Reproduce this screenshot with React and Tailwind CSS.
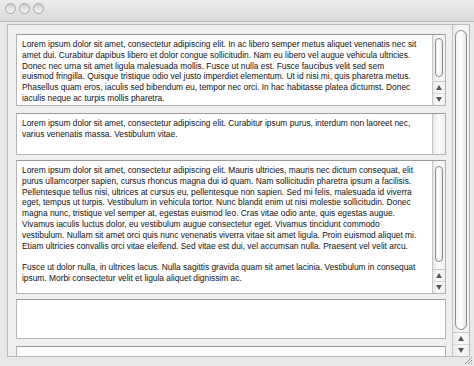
import React from 'react';

const boxes = [
  {
    h: 'h-[72px]',
    mt: 'mt-0',
    bar: { thumbTop: 3, thumbH: 39, arrows: true },
    lines: [
      'Lorem ipsum dolor sit amet, consectetur adipiscing elit. In ac libero semper metus aliquet venenatis nec sit',
      'amet dui. Curabitur dapibus libero et dolor congue sollicitudin. Nam eu libero vel augue vehicula ultricies.',
      'Donec nec urna sit amet ligula malesuada mollis. Fusce ut nulla est. Fusce faucibus velit sed sem',
      'euismod fringilla. Quisque tristique odio vel justo imperdiet elementum. Ut id nisi mi, quis pharetra metus.',
      'Phasellus quam eros, iaculis sed bibendum eu, tempor nec orci. In hac habitasse platea dictumst. Donec',
      'iaculis neque ac turpis mollis pharetra.',
    ],
  },
  {
    h: 'h-[42px]',
    mt: 'mt-[7px]',
    bar: { empty: true },
    lines: [
      'Lorem ipsum dolor sit amet, consectetur adipiscing elit. Curabitur ipsum purus, interdum non laoreet nec,',
      'varius venenatis massa. Vestibulum vitae.',
    ],
  },
  {
    h: 'h-[134px]',
    mt: 'mt-[5px]',
    bar: { thumbTop: 5, thumbH: 96, arrows: true },
    lines: [
      'Lorem ipsum dolor sit amet, consectetur adipiscing elit. Mauris ultricies, mauris nec dictum consequat, elit',
      'purus ullamcorper sapien, cursus rhoncus magna dui id quam. Nam sollicitudin pharetra ipsum a facilisis.',
      'Pellentesque tellus nisi, ultrices at cursus eu, pellentesque non sapien. Sed mi felis, malesuada id viverra',
      'eget, tempus ut turpis. Vestibulum in vehicula tortor. Nunc blandit enim ut nisi molestie sollicitudin. Donec',
      'magna nunc, tristique vel semper at, egestas euismod leo. Cras vitae odio ante, quis egestas augue.',
      'Vivamus iaculis luctus dolor, eu vestibulum augue consectetur eget. Vivamus tincidunt commodo',
      'vestibulum. Nullam sit amet orci quis nunc venenatis viverra vitae sit amet ligula. Proin euismod aliquet mi.',
      'Etiam ultricies convallis orci vitae eleifend. Sed vitae est dui, vel accumsan nulla. Praesent vel velit arcu.',
      '',
      'Fusce ut dolor nulla, in ultrices lacus. Nulla sagittis gravida quam sit amet lacinia. Vestibulum in consequat',
      'ipsum. Morbi consectetur velit et ligula aliquet dignissim ac.',
    ],
  },
  { h: 'h-[40px]', mt: 'mt-[5px]', lines: [] },
  { h: 'h-[40px]', mt: 'mt-[7px]', lines: [] },
];

const Arrow = ({ up }) => (
  <div className="h-[11px] flex items-center justify-center">
    <svg width="6" height="5" viewBox="0 0 6 5">
      <path d={up ? 'M3 0L6 5H0Z' : 'M0 0H6L3 5Z'} fill="#555" />
    </svg>
  </div>
);

const ScrollBar = ({ thumbTop, thumbH, arrows, empty, width = 'w-[13px]' }) => (
  <div className={`${width} shrink-0 flex flex-col border-l border-[#c6c6c6] bg-gradient-to-r from-[#e9e9e9] via-[#fafafa] to-[#f0f0f0]`}>
    <div className="flex-1 relative">
      {!empty && (
        <div
          className="absolute left-[2px] right-[2px] rounded-full border border-[#8c8c8c] bg-gradient-to-r from-[#f4f4f4] via-white to-[#e4e4e4]"
          style={{ top: thumbTop, height: thumbH }}
        />
      )}
    </div>
    {arrows && (
      <div className="border-t border-[#c6c6c6]">
        <Arrow up />
        <div className="border-t border-[#d6d6d6]" />
        <Arrow />
      </div>
    )}
  </div>
);

const TextBox = ({ box }) => (
  <div className={`${box.h} ${box.mt} shrink-0 flex bg-white border border-[#b4b4b4] border-t-[#9a9a9a] overflow-hidden`}>
    <div className="flex-1 min-w-0 pl-[5px] pt-[4px] text-[8.4px] leading-[10.8px] text-[#111] overflow-hidden">
      {box.lines.map((l, i) => (
        <div key={i} className="whitespace-nowrap h-[10.8px]">{l}</div>
      ))}
    </div>
    {box.bar && <ScrollBar {...box.bar} />}
  </div>
);

const Light = () => (
  <div className="w-[11px] h-[11px] rounded-full border border-[#a4a4a4] bg-gradient-to-b from-[#c9c9c9] via-[#e6e6e6] to-[#f4f4f4]" />
);

export default function App() {
  return (
    <div
      className="w-[474px] h-[366px] flex flex-col bg-[#e8e8e8] overflow-hidden"
      style={{ fontFamily: '"Liberation Sans", Arial, sans-serif' }}
    >
      {/* title bar */}
      <div className="h-[22px] shrink-0 flex items-start gap-[3px] pl-[5px] pt-[3px] bg-gradient-to-b from-[#ececec] to-[#d9d9d9] border-b border-[#b8b8b8]">
        <Light />
        <Light />
        <Light />
      </div>

      {/* scroll view */}
      <div className="flex-1 min-h-0 pl-[7px] pr-[4px] pt-[2px] pb-[9px] flex flex-col relative">
        <div className="flex-1 min-h-0 flex border border-[#b9b9b9] bg-[#efefef] overflow-hidden">
          <div className="flex-1 min-w-0 min-h-0 flex flex-col pl-[8px] pr-[6px] pt-[9px] overflow-hidden">
            {boxes.map((b, i) => (
              <TextBox key={i} box={b} />
            ))}
          </div>
          <ScrollBar thumbTop={5} thumbH={300} arrows width="w-[17px]" />
        </div>

        {/* resize grip */}
        <svg className="absolute right-[1px] bottom-[1px]" width="10" height="10" viewBox="0 0 10 10">
          <path d="M9 2L2 9M9 5L5 9M9 8L8 9" stroke="#9a9a9a" strokeWidth="1" />
        </svg>
      </div>
    </div>
  );
}
